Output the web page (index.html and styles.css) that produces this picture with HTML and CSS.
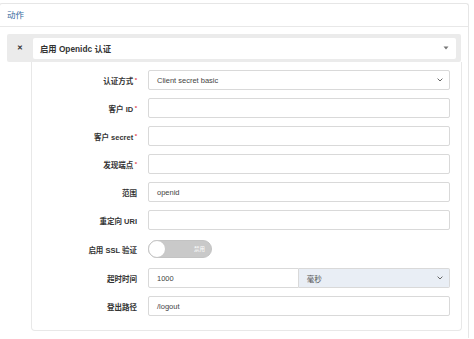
FILE: index.html
```html
<!DOCTYPE html>
<html lang="zh">
<head>
<meta charset="utf-8">
<title>动作</title>
<link rel="stylesheet" href="styles.css">
</head>
<body>
<div class="card">
  <div class="card-header">动作</div>
  <div class="card-body">
    <div class="action-bar">
      <div class="remove">&#x2715;</div>
      <div class="action-select">
        <span>启用 Openidc 认证</span>
        <svg class="tri" width="6" height="4" viewBox="0 0 6 4"><path d="M0.5 0.5 L5.5 0.5 L3 3.5 Z" fill="#777"/></svg>
      </div>
    </div>
    <div class="action-body">
      <div class="row">
        <div class="label">认证方式<span class="req">*</span></div>
        <div class="field select">
          <span>Client secret basic</span>
          <svg class="chev" width="6" height="4" viewBox="0 0 6 4"><path d="M0.6 0.6 L3 3 L5.4 0.6" fill="none" stroke="#666" stroke-width="1"/></svg>
        </div>
      </div>
      <div class="row">
        <div class="label">客户 ID<span class="req">*</span></div>
        <div class="field"></div>
      </div>
      <div class="row">
        <div class="label">客户 secret<span class="req">*</span></div>
        <div class="field"></div>
      </div>
      <div class="row">
        <div class="label">发现端点<span class="req">*</span></div>
        <div class="field"></div>
      </div>
      <div class="row">
        <div class="label">范围</div>
        <div class="field"><span>openid</span></div>
      </div>
      <div class="row">
        <div class="label">重定向 URI</div>
        <div class="field"></div>
      </div>
      <div class="row row-toggle">
        <div class="label">启用 SSL 验证</div>
        <div class="toggle">
          <span class="knob"></span>
          <span class="toggle-text">禁用</span>
        </div>
      </div>
      <div class="row">
        <div class="label">超时时间</div>
        <div class="group">
          <div class="field group-left"><span>1000</span></div>
          <div class="field select group-right">
            <span>毫秒</span>
            <svg class="chev" width="6" height="4" viewBox="0 0 6 4"><path d="M0.6 0.6 L3 3 L5.4 0.6" fill="none" stroke="#666" stroke-width="1"/></svg>
          </div>
        </div>
      </div>
      <div class="row">
        <div class="label">登出路径</div>
        <div class="field"><span>/logout</span></div>
      </div>
    </div>
  </div>
</div>
</body>
</html>
```
FILE: styles.css
```css
html, body {
  margin: 0;
  padding: 0;
  background: #ffffff;
}
body {
  font-family: "Liberation Sans", "Noto Sans CJK SC", sans-serif;
  color: #333;
  height: 339px;
  overflow: hidden;
}
.card {
  margin: 3px 0 0 -1px;
  width: 468px;
  height: 334px;
  border: 1px solid #e6e6e6;
  border-bottom: none;
  border-radius: 3px 3px 0 0;
  background: #fff;
}
.card-header {
  height: 22px;
  line-height: 22px;
  padding-left: 7px;
  font-size: 8.5px;
  color: #33679c;
  border-bottom: 1px solid #e8e8e8;
}
.card-body {
  padding: 7px 7px 0 7px;
}
.action-bar {
  display: flex;
  align-items: center;
  height: 28px;
  background: #ebebeb;
  border-radius: 2px;
}
.remove {
  width: 26px;
  text-align: center;
  font-size: 7px;
  font-weight: bold;
  color: #333;
}
.action-select {
  flex: 1;
  margin-right: 5px;
  height: 21px;
  background: #fff;
  border-radius: 2px;
  display: flex;
  align-items: center;
  justify-content: space-between;
  padding: 0 7px;
  font-size: 8.3px;
  font-weight: 600;
  color: #333;
}
.tri {
  display: block;
}
.action-body {
  margin-left: 24px;
  margin-right: -1px;
  border: 1px solid #e8e8e8;
  border-top: none;
  border-radius: 0 0 4px 4px;
  padding: 8px 11px 14px 0;
  display: flex;
  flex-direction: column;
  gap: 8px;
}
.row {
  display: flex;
  align-items: center;
  height: 20px;
}
.row-toggle {
  height: 22px;
}
.label {
  width: 116px;
  flex: none;
  box-sizing: border-box;
  padding-right: 11px;
  text-align: right;
  font-size: 7.5px;
  font-weight: bold;
  color: #333;
}
.req {
  color: #e0454b;
  font-size: 6px;
  vertical-align: 2px;
  margin-left: 1.5px;
}
.field {
  flex: 1;
  height: 20px;
  box-sizing: border-box;
  border: 1px solid #d9d9d9;
  border-radius: 2px;
  background: #fff;
  display: flex;
  align-items: center;
  padding: 0 8px;
  font-size: 7.5px;
  color: #444;
}
.select {
  justify-content: space-between;
  padding-right: 6px;
}
.chev {
  display: block;
}
.group {
  flex: 1;
  display: flex;
}
.group-left {
  flex: 149;
  border-radius: 2px 0 0 2px;
}
.group-right {
  flex: 153;
  border-left: none;
  border-radius: 0 2px 2px 0;
  background: #e9eef5;
  color: #555;
}
.toggle {
  position: relative;
  width: 64px;
  height: 18px;
  box-sizing: border-box;
  border-radius: 9px;
  background: #c9c9c9;
  border: 1px solid #c3c3c3;
  display: flex;
  align-items: center;
  justify-content: flex-end;
}
.knob {
  position: absolute;
  left: -1px;
  top: -1px;
  width: 18px;
  height: 18px;
  box-sizing: border-box;
  border-radius: 50%;
  background: #fff;
  border: 1px solid #c6c6c6;
}
.toggle-text {
  font-size: 5.5px;
  color: #fff;
  margin-right: 6px;
}
```
